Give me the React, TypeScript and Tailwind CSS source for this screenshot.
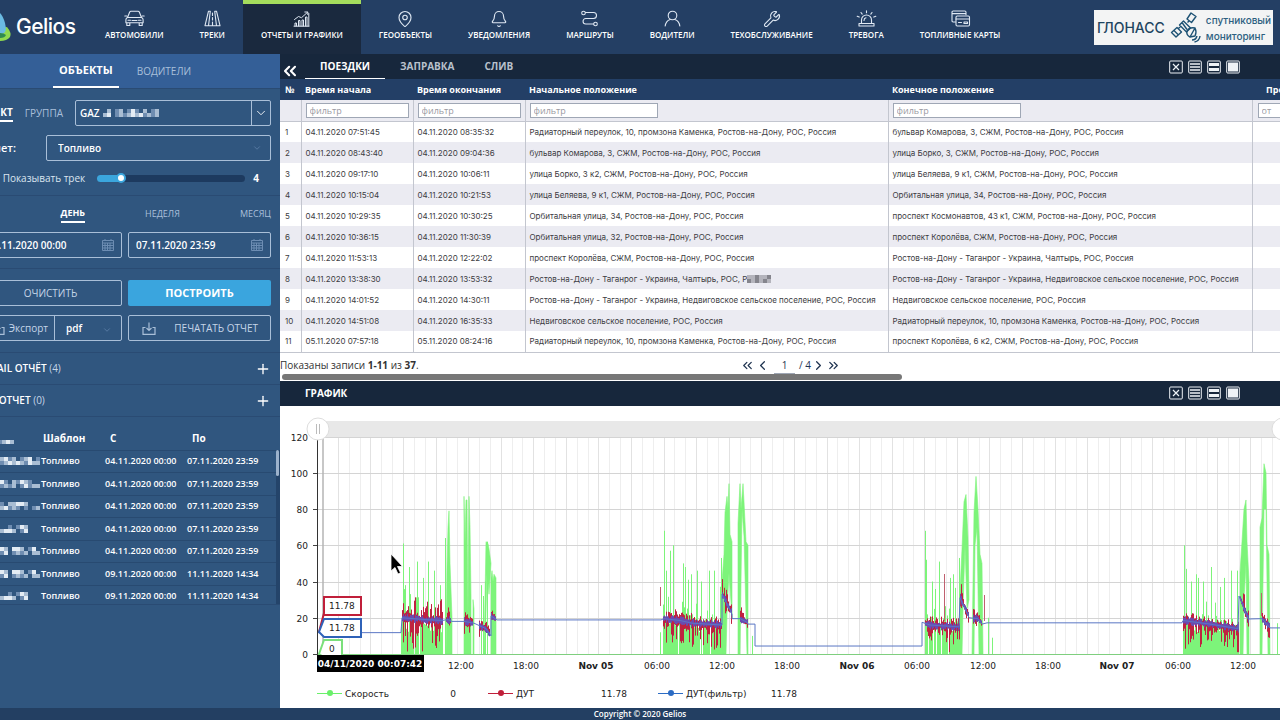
import type { ReactNode } from "react";
import { Bell, ChevronDown, ChevronLeft, ChevronRight, ChevronsLeft, ChevronsRight, MapPin, Plus, Wrench } from "lucide-react";
import clsx from "clsx";

const icon = {
  width: 21,
  height: 17,
  fill: "none",
  stroke: "currentColor",
  strokeWidth: 1.1,
  strokeLinecap: "round" as const,
  strokeLinejoin: "round" as const,
};

const CarIcon = () => (
  <svg {...icon} viewBox="0 0 21 17">
    <path d="M3.5 7.5 5.6 2.2Q6 1.3 7 1.3h7q1 0 1.4.9l2.1 5.3M3.5 7.5h14q1.6.6 1.6 2.2v3.1H1.9V9.7q0-1.6 1.6-2.2ZM2.8 12.8v2.7h3v-2.7M15.2 12.8v2.7h3v-2.7M.8 6h2M18.2 6h2M4 10.2h2.5M14.5 10.2H17M8 10.5h5" />
  </svg>
);

const RoadIcon = () => (
  <svg {...icon} viewBox="0 0 21 17">
    <path d="M6.5 1.2 3 15.7h15L14.5 1.2M6.5 1.2h1.8L6.5 15.7M14.5 1.2h-1.8l1.8 14.5M10.5 3v2.5M10.5 7.5V10M10.5 12v3" />
  </svg>
);

const ChartIcon = () => (
  <svg {...icon} strokeWidth={1} viewBox="0 0 21 17">
    <path d="M4 16v-3h1.5v3M7.5 16v-5.5H9V16M11 16v-6h1.5v6M14.5 16V7H16v9M3 16.2h15M17.8 16V3.5M3.5 9.5l4-3 3 1.2 6-5.4M13.8 2h3v2.6" />
  </svg>
);

const RouteIcon = () => (
  <svg {...icon} viewBox="0 0 21 17">
    <circle cx="4.5" cy="3" r="1.8" />
    <circle cx="16.5" cy="14" r="1.8" />
    <path d="M6.5 2.5h8a3 3 0 0 1 0 6H6.8a2.7 2.7 0 0 0 0 5.500h7.800" />
  </svg>
);

const DriverIcon = () => (
  <svg {...icon} viewBox="0 0 21 17">
    <circle cx="10.5" cy="5.5" r="4.3" />
    <path d="M3.2 16q.6-5.2 5-6.6M17.8 16q-.6-5.2-5-6.6" />
  </svg>
);

const AlarmIcon = () => (
  <svg {...icon} viewBox="0 0 21 17">
    <path d="M5.5 13.5V10a5 5 0 0 1 10 0v3.5M3 13.5h15V16H3ZM8 10.5q0-2.2 2-2.7M10.5.8v2M5 2.5l1.200 1.600M16 2.500l-1.200 1.600M1.200 6.200l2 .9M19.800 6.200l-2 .9" />
  </svg>
);

const CardsIcon = () => (
  <svg {...icon} viewBox="0 0 21 17">
    <path d="M5.5 12H3.2q-1.2 0-1.2-1.2V2.2Q2 1 3.2 1h11.6Q16 1 16 2.2v2.5M2 3.6h14" />
    <rect x="6" y="6" width="13.5" height="10" rx="1.2" />
    <path d="M6 9h13.5M8.5 12.5h3M14 13.5h3.5v-1.500H14Z" />
  </svg>
);

const navItems: { label: string; icon: ReactNode; active?: boolean }[] = [
  { label: "АВТОМОБИЛИ", icon: <CarIcon /> },
  { label: "ТРЕКИ", icon: <RoadIcon /> },
  { label: "ОТЧЕТЫ И ГРАФИКИ", icon: <ChartIcon />, active: true },
  { label: "ГЕООБЪЕКТЫ", icon: <MapPin size={18} strokeWidth={1.5} /> },
  { label: "УВЕДОМЛЕНИЯ", icon: <Bell size={18} strokeWidth={1.5} /> },
  { label: "МАРШРУТЫ", icon: <RouteIcon /> },
  { label: "ВОДИТЕЛИ", icon: <DriverIcon /> },
  { label: "ТЕХОБСЛУЖИВАНИЕ", icon: <Wrench size={18} strokeWidth={1.5} /> },
  { label: "ТРЕВОГА", icon: <AlarmIcon /> },
  { label: "ТОПЛИВНЫЕ КАРТЫ", icon: <CardsIcon /> },
];

function Header() {
  return (
    <header className="flex h-[54px] overflow-hidden bg-[#243f64] text-white">
      <a href="#" className="relative flex w-[87px] shrink-0 items-center pl-4">
        <svg className="absolute left-0 top-2" width="12" height="36" viewBox="0 0 12 36">
          <path d="M0 20 7 19q5 6 3 10-3 4-10 4Z" fill="#8fd94f" />
          <path d="M0 5q3 3 5 10 2 8-1 10L0 27Z" fill="#6bbbe2" />
          <path d="M0 25q4 0 6 2-1 3-6 3Z" fill="#2f8a4f" />
        </svg>
        <span className="font-['Inter'] text-[21px] leading-6 font-medium tracking-tight">Gelios</span>
      </a>
      <nav className="flex flex-1">
        {navItems.map((item) => (
          <a
            key={item.label}
            href="#"
            className={clsx(
              "flex shrink-0 flex-col items-center gap-[2px] border-t-4 px-[18px] pt-[6px] text-[8px] leading-3 font-semibold whitespace-nowrap",
              item.active ? "border-[#a4dc5c] bg-[#1a293e]" : "border-transparent",
            )}
          >
            <span className="flex h-[17px] items-center text-[#dfe8f3]">{item.icon}</span>
            {item.label}
          </a>
        ))}
      </nav>
      <div className="mt-[10px] mr-[7px] flex h-[35px] w-[179px] shrink-0 items-center justify-between bg-[#f3f4f4] pr-[2px] pl-[3px] font-['Inter'] text-[#1d4560]">
        <span className="text-[14px] font-medium">ГЛОНАСС</span>
        <svg width="31" height="31" viewBox="0 0 31 31" fill="none" stroke="#1d5274" strokeWidth="1.4" strokeLinejoin="round">
          <path d="m17 7 4-6 5 3.5-4.5 6ZM1.5 20.5l5.5-5 4.5 4.5-5.5 5ZM3.5 18l5 5M9.5 13l4-4 7 7-4 4ZM12 10.5l5 7M17.5 10.5l2-2M8.5 16.5l2-2" />
          <path d="M17 19q2-4 8-3l-5 9q-4-2-3-6ZM25 16q2 4 0 8l-5 1M22 28q4 0 5-4M24.5 30q5-1 5.5-6" />
        </svg>
        <span className="text-[10px] leading-4 font-medium text-[#2c6080]">
          спутниковый
          <br />
          мониторинг
        </span>
      </div>
    </header>
  );
}

// censored plate numbers, one character of the mask per square
function Mosaic({ mask, className }: { mask: string[]; className?: string }) {
  const fills: Record<string, string> = { a: "#e4ecf4", b: "#a9bdd3", c: "#6f8db1", d: "#85858d", e: "#b4b4bc" };
  return (
    <svg className={clsx("shrink-0", className)} width={mask[0].length * 4} height={mask.length * 4} shapeRendering="crispEdges">
      {mask.flatMap((row, y) =>
        row.split("").map((c, x) => (fills[c] ? <rect key={`${x}-${y}`} x={x * 4} y={y * 4} width="4" height="4" fill={fills[c]} /> : null)),
      )}
    </svg>
  );
}

const CalendarIcon = () => (
  <svg width="12" height="12" viewBox="0 0 12 12" fill="none" stroke="#6d8db3">
    <path d="M.5 1.5h11v10H.5ZM.5 4h11M3 4v7.5M5.5 4v7.5M8 4v7.5M.5 6.5h11M.5 9h11M3 0v2M9 0v2" />
  </svg>
);

function DateField({ label, value }: { label: string; value: string }) {
  return (
    <label className="flex h-[26px] w-[143px] shrink-0 items-center rounded-[2px] border border-[#a9bfd8] px-[7px]">
      <span className="sr-only">{label}</span>
      <input className="min-w-0 flex-1 text-[10px] font-semibold outline-none" defaultValue={value} />
      <CalendarIcon />
    </label>
  );
}

const savedReports = [
  { mask: ["bacb.cba.c", "cbababcabb"], from: "04.11.2020 00:00", to: "07.11.2020 23:59" },
  { mask: ["ac.bcabc..", "cbcb.cacbb"], from: "04.11.2020 00:00", to: "07.11.2020 23:59" },
  { mask: ["c.bbaab...", "bacbc.c.cb"], from: "04.11.2020 00:00", to: "07.11.2020 23:59" },
  { mask: ["..c.cab...", "baab.ca..."], from: "04.11.2020 00:00", to: "07.11.2020 23:59" },
  { mask: ["ab.aab.ca.", "ca.cbcb.bb"], from: "04.11.2020 00:00", to: "07.11.2020 23:59" },
  { mask: ["ab.aab.ca.", "ca.cbcb.bb"], from: "09.11.2020 00:00", to: "11.11.2020 14:34" },
  { mask: ["..c.cab...", "baab.ca..."], from: "09.11.2020 00:00", to: "11.11.2020 14:34" },
];

function Sidebar() {
  return (
    <aside className="flex w-[280px] shrink-0 justify-end overflow-hidden bg-[#30567f] text-white">
      <div className="w-[310px] shrink-0">
        <div className="flex h-[35px] border-b border-[#2a4b73] bg-[#345f97] pl-[83px]">
          <button className="border-b-2 border-white px-[6px] text-[11px] font-bold">ОБЪЕКТЫ</button>
          <button className="ml-3 px-[6px] text-[10px] text-[#a9bfda]">ВОДИТЕЛИ</button>
        </div>

        <div className="flex flex-col gap-[9px] border-b border-[#2a4b73] px-[9px] pt-[11px] pb-[9px]">
          <div className="flex items-center justify-end gap-3 text-[10px]">
            <button className="border-b-2 border-white leading-4 font-bold">ОБЪЕКТ</button>
            <button className="text-[#a9bfda]">ГРУППА</button>
            <div className="flex h-[26px] w-[196px] shrink-0 items-center rounded-[2px] border border-[#a9bfd8]">
              <input aria-label="Объект" className="w-[27px] pl-1 text-[10px] font-semibold outline-none" defaultValue="GAZ" />
              <Mosaic mask={[".b.cb.cac.b.cb", "ba.cbcbabacbcb"]} />
              <button aria-label="Выбрать объект" className="ml-auto flex h-full w-[19px] items-center justify-center border-l border-[#a9bfd8]">
                <ChevronDown size={14} strokeWidth={1.5} />
              </button>
            </div>
          </div>
          <div className="flex items-center justify-end gap-[30px]">
            <label htmlFor="template" className="text-[11px] font-semibold">Отчет:</label>
            <div className="relative w-[225px] shrink-0">
              <select id="template" className="block h-[26px] w-full appearance-none rounded-[2px] border border-[#a9bfd8] pl-[11px] text-[10px] font-semibold">
                <option>Топливо</option>
              </select>
              <ChevronDown className="absolute top-2 right-[9px] text-[#5d7fa8]" size={10} />
            </div>
          </div>
          <div className="flex h-4 items-center justify-end gap-3 pr-3">
            <label htmlFor="track" className="text-[10px] font-medium text-[#dbe5f0]">Показывать трек</label>
            <input
              id="track"
              type="range"
              min="0"
              max="30"
              defaultValue="4"
              className="h-[7px] w-[148px] appearance-none rounded-full bg-[linear-gradient(to_right,#3ba6dd_16%,#1d3a5f_16%)] [&::-webkit-slider-thumb]:size-[10px] [&::-webkit-slider-thumb]:appearance-none [&::-webkit-slider-thumb]:rounded-full [&::-webkit-slider-thumb]:border-2 [&::-webkit-slider-thumb]:border-[#3ba6dd] [&::-webkit-slider-thumb]:bg-white"
            />
            <span className="-ml-1 text-[10px] font-bold">4</span>
          </div>
        </div>

        <div className="border-b border-[#2a4b73] px-[9px] pt-[9px] pb-[10px]">
          <div className="mb-[9px] flex justify-end gap-[60px] text-[9px] leading-4">
            <button className="border-b-2 border-white font-bold">ДЕНЬ</button>
            <button className="text-[#a9bfda]">НЕДЕЛЯ</button>
            <button className="text-[#a9bfda]">МЕСЯЦ</button>
          </div>
          <div className="flex justify-between">
            <DateField label="Начало" value="04.11.2020 00:00" />
            <DateField label="Конец" value="07.11.2020 23:59" />
          </div>
        </div>

        <div className="grid grid-cols-2 gap-x-[6px] gap-y-[9px] border-b border-[#2a4b73] px-[9px] pt-[11px] pb-[11px] text-[10px] text-[#c5d5e8]">
          <button className="h-[26px] rounded-[2px] border border-[#a9bfd8]">ОЧИСТИТЬ</button>
          <button className="h-[26px] rounded-[2px] bg-[#3aa5de] text-[11px] font-bold text-white">ПОСТРОИТЬ</button>
          <div className="flex h-[26px] items-center rounded-[2px] border border-[#a9bfd8]">
            <button className="flex h-full w-[75px] items-center justify-end gap-1 border-r border-[#a9bfd8] pr-[6px]">
              <DownloadIcon />
              Экспорт
            </button>
            <div className="relative flex-1">
              <select aria-label="Формат" className="block w-full appearance-none pl-[11px] text-[10px] font-semibold text-white">
                <option>pdf</option>
              </select>
              <ChevronDown className="absolute top-1 right-[9px] text-[#5d7fa8]" size={10} />
            </div>
          </div>
          <button className="flex h-[26px] items-center justify-between rounded-[2px] border border-[#a9bfd8] pr-3 pl-[13px]">
            <DownloadIcon />
            ПЕЧАТАТЬ ОТЧЕТ
          </button>
        </div>

        {[
          ["E-MAIL ОТЧЁТ", "(4)"],
          ["FTP ОТЧЕТ", "(0)"],
        ].map(([title, count]) => (
          <button key={title} className="flex h-8 w-full items-center justify-between border-b border-[#2a4b73] px-[9px] text-[10px] font-semibold">
            <span>
              {title} <span className="font-normal text-[#c5d5e8]">{count}</span>
            </span>
            <Plus size={16} strokeWidth={2} />
          </button>
        ))}

        <div className="relative h-[188px] overflow-hidden border-b border-[#2a4b73]">
          <table className="w-full table-fixed text-left text-[9px] leading-3 font-semibold whitespace-nowrap">
            <colgroup>
              <col className="w-[71px]" />
              <col className="w-[64px]" />
              <col className="w-[82px]" />
              <col />
            </colgroup>
            <thead>
              <tr className="h-[33px] align-bottom text-[10px] font-bold">
                <th className="pb-[6px]">
                  <Mosaic className="ml-5" mask={["..cbab"]} />
                </th>
                <th className="pb-[6px] pl-[2px]">Шаблон</th>
                <th className="pb-[6px] pl-[5px]">С</th>
                <th className="pb-[6px] pl-[5px]">По</th>
              </tr>
            </thead>
            <tbody>
              {savedReports.map((r, i) => (
                <tr key={i} className="h-[22px] border-t border-[#284a71] even:h-[23px]">
                  <td>
                    <Mosaic className="ml-[30px]" mask={r.mask} />
                  </td>
                  <td>Топливо</td>
                  <td>{r.from}</td>
                  <td>{r.to}</td>
                </tr>
              ))}
            </tbody>
          </table>
          <div className="absolute top-[33px] right-0 bottom-0 w-1 bg-[#24446a]">
            <div className="h-[26px] w-[3px] rounded-full bg-[#9cb2cc]" />
          </div>
        </div>
      </div>
    </aside>
  );
}

function DownloadIcon() {
  return (
    <svg width="14" height="13" viewBox="0 0 14 13" fill="none" stroke="#a9bfd8" strokeWidth="1.2">
      <path d="M3.5 5.5H1v6.8h12V5.5h-2.5M7 .5v8M4.5 6 7 8.5 9.5 6" />
    </svg>
  );
}

function WindowButtons() {
  const glyphs = ["m4 4 6 6M10 4l-6 6", "M2 4h10M2 7h10M2 10h10", "M2 4.5h10M2 9.5h10", "M2 7h10"];
  const widths = [1.2, 1.6, 3, 9];
  return (
    <div className="mr-10 ml-auto flex items-center gap-[5px]">
      {["Закрыть", "Список", "Разделить", "Развернуть"].map((label, i) => (
        <button key={label} aria-label={label}>
          <svg width="14" height="14" viewBox="0 0 14 14" fill="none" stroke="#eef2f6">
            <rect x=".7" y="1" width="12.6" height="12" rx="1" />
            <path d={glyphs[i]} strokeWidth={widths[i]} />
          </svg>
        </button>
      ))}
    </div>
  );
}

const trips = [
  ["04.11.2020 07:51:45", "04.11.2020 08:35:32", "Радиаторный переулок, 10, промзона Каменка, Ростов-на-Дону, РОС, Россия", "бульвар Комарова, 3, СЖМ, Ростов-на-Дону, РОС, Россия"],
  ["04.11.2020 08:43:40", "04.11.2020 09:04:36", "бульвар Комарова, 3, СЖМ, Ростов-на-Дону, РОС, Россия", "улица Борко, 3, СЖМ, Ростов-на-Дону, РОС, Россия"],
  ["04.11.2020 09:17:10", "04.11.2020 10:06:11", "улица Борко, 3 к2, СЖМ, Ростов-на-Дону, РОС, Россия", "улица Беляева, 9 к1, СЖМ, Ростов-на-Дону, РОС, Россия"],
  ["04.11.2020 10:15:04", "04.11.2020 10:21:53", "улица Беляева, 9 к1, СЖМ, Ростов-на-Дону, РОС, Россия", "Орбитальная улица, 34, Ростов-на-Дону, РОС, Россия"],
  ["04.11.2020 10:29:35", "04.11.2020 10:30:25", "Орбитальная улица, 34, Ростов-на-Дону, РОС, Россия", "проспект Космонавтов, 43 к1, СЖМ, Ростов-на-Дону, РОС, Россия"],
  ["04.11.2020 10:36:15", "04.11.2020 11:30:39", "Орбитальная улица, 32, Ростов-на-Дону, РОС, Россия", "проспект Королёва, СЖМ, Ростов-на-Дону, РОС, Россия"],
  ["04.11.2020 11:53:13", "04.11.2020 12:22:02", "проспект Королёва, СЖМ, Ростов-на-Дону, РОС, Россия", "Ростов-на-Дону - Таганрог - Украина, Чалтырь, РОС, Россия"],
  ["04.11.2020 13:38:30", "04.11.2020 13:53:32", "Ростов-на-Дону - Таганрог - Украина, Чалтырь, РОС, Р", "Ростов-на-Дону - Таганрог - Украина, Недвиговское сельское поселение, РОС, Россия"],
  ["04.11.2020 14:01:52", "04.11.2020 14:30:11", "Ростов-на-Дону - Таганрог - Украина, Недвиговское сельское поселение, РОС, Россия", "Недвиговское сельское поселение, РОС, Россия"],
  ["04.11.2020 14:51:08", "04.11.2020 16:35:33", "Недвиговское сельское поселение, РОС, Россия", "Радиаторный переулок, 10, промзона Каменка, Ростов-на-Дону, РОС, Россия"],
  ["05.11.2020 07:57:18", "05.11.2020 08:24:16", "Радиаторный переулок, 10, промзона Каменка, Ростов-на-Дону, РОС, Россия", "проспект Королёва, 6 к2, СЖМ, Ростов-на-Дону, РОС, Россия"],
];

const columns = ["Время начала", "Время окончания", "Начальное положение", "Конечное положение"];

function Trips() {
  return (
    <section className="overflow-hidden">
      <div className="flex h-[25px] bg-[#17273c] text-[10px] font-bold text-[#b9c1cc]">
        <button aria-label="Свернуть панель" className="mt-2 flex w-[25px] items-center text-white">
          <ChevronsLeft size={20} strokeWidth={2.5} />
        </button>
        <button className="border-b border-white px-[15px] text-white">ПОЕЗДКИ</button>
        <button className="px-[15px]">ЗАПРАВКА</button>
        <button className="px-[15px]">СЛИВ</button>
        <WindowButtons />
      </div>
      <table className="w-[1072px] table-fixed border-b border-[#c3c6cf] text-left font-['Inter'] text-[8px] whitespace-nowrap text-[#3c3c42]">
        <colgroup>
          <col className="w-[21px]" />
          <col className="w-[112px]" />
          <col className="w-[112px]" />
          <col className="w-[363px]" />
          <col className="w-[364px]" />
          <col />
        </colgroup>
        <thead className="font-['Open_Sans']">
          <tr className="h-[21px] bg-[#233f66] text-[9px] text-white">
            <th className="pl-[5px]">№</th>
            {columns.map((c) => (
              <th key={c} className="pl-1">{c}</th>
            ))}
            <th className="pl-[14px]">Пробег, км</th>
          </tr>
          <tr className="h-[21px] border-b border-[#c3c6cf] bg-[#ebebf2]">
            <td className="border-r border-[#c3c6cf]" />
            {columns.map((c, i) => (
              <td key={c} className="border-r border-[#c3c6cf] pl-1">
                <input
                  aria-label={c}
                  placeholder="фильтр"
                  className={clsx("block h-[15px] border border-[#9fa7b5] bg-white px-[3px] text-[9px] font-normal placeholder:text-[#9a9aa2]", i < 2 ? "w-[103px]" : "w-[128px]")}
                />
              </td>
            ))}
            <td className="pl-[5px]">
              <input aria-label="Пробег от" placeholder="от" className="block h-[15px] w-12 border border-[#9fa7b5] bg-white px-[3px] text-[9px] placeholder:text-[#9a9aa2]" />
            </td>
          </tr>
        </thead>
        <tbody>
          {trips.map((row, i) => (
            <tr key={i} className="h-[21px] even:bg-[#ebebf2]">
              <td className="border-r border-[#c3c6cf] pl-[5px]">{i + 1}</td>
              {row.map((cell, j) => (
                <td key={j} className="border-r border-[#c3c6cf] pl-1">
                  <span className="flex items-center">
                    {cell}
                    {i === 7 && j === 2 && <Mosaic mask={["eedeed", "dedede"]} />}
                  </span>
                </td>
              ))}
              <td />
            </tr>
          ))}
        </tbody>
      </table>
      <div className="relative flex h-[21px] items-center pt-[5px] text-[10px] text-[#333]">
        <p>
          Показаны записи <b>1-11</b> из <b>37</b>.
        </p>
        <div className="absolute left-[460px] flex items-center text-[#1f3350]">
          <button aria-label="Первая страница"><ChevronsLeft size={15} /></button>
          <button aria-label="Назад"><ChevronLeft size={15} /></button>
          <input aria-label="Страница" defaultValue="1" className="mx-1 h-4 w-[21px] border-b border-[#9fa7b5] text-center" />
          <span>/ 4</span>
          <button aria-label="Вперёд"><ChevronRight size={15} /></button>
          <button aria-label="Последняя страница"><ChevronsRight size={15} /></button>
        </div>
      </div>
      <div className="mb-px ml-[2px] h-[6px] w-[62%] rounded-full bg-[#777]" />
    </section>
  );
}

// plot area: x in pixels, speed/fuel 0..120 on the y axis
const Y0 = 248;
const yOf = (v: number) => Y0 - v * 1.812;

function rng(seed: number) {
  let s = seed;
  return () => {
    s = (s * 1103515245 + 12345) % 2147483648;
    return s / 2147483648;
  };
}

// [x, speed] peaks that rise above the stop-and-go noise
const peaks: [number, number][] = [
  [123, 61], [125, 38], [129, 48], [137, 51], [143, 42], [148, 51], [154, 46], [160, 38], [165, 64],
  [201, 38], [203, 32], [205, 40], [207, 62],
  [380, 12], [384, 68], [386, 46], [390, 57], [393, 60], [403, 50], [405, 48], [408, 41], [411, 44], [417, 46], [421, 40], [429, 46], [434, 46], [441, 53],
  [472, 10], [645, 68], [646, 52], [652, 40], [659, 51], [670, 42], [673, 44], [679, 53], [712, 9], [708, 20],
  [904, 60], [906, 47], [911, 40], [916, 44], [918, 42], [923, 40], [931, 48], [940, 37], [944, 42], [951, 46], [957, 46], [997, 17],
];

// driving stretches, as outlines; most are closed on the zero line
const bursts: [number, number][][] = [
  [[166, 0], [167, 48], [168, 70], [169, 79], [170, 50], [172, 20], [172, 0]],
  [[184, 0], [184, 87], [185, 60], [186, 85], [187, 85], [188, 20], [189, 87], [190, 70], [191, 32], [191, 0]],
  [[193, 0], [193, 30], [194, 25], [194, 0]],
  [[204, 0], [206, 62], [208, 61], [209, 58], [211, 50], [209, 33], [207, 45], [205, 0]],
  [[211, 0], [211, 42], [212, 46], [213, 40], [214, 44], [216, 42], [216, 0]],
  [[442, 0], [442, 40], [444, 55], [445, 78], [447, 87], [448, 80], [449, 94], [450, 66], [452, 62], [452, 20], [449, 45], [447, 22], [446, 0]],
  [[458, 0], [458, 72], [460, 94], [461, 80], [463, 94], [464, 84], [466, 62], [468, 60], [468, 0], [467, 0], [464, 65], [462, 80], [461, 40], [460, 0]],
  [[680, 0], [680, 35], [682, 58], [684, 84], [686, 88], [688, 64], [689, 30], [687, 25], [685, 60], [683, 25], [682, 0]],
  [[692, 0], [694, 78], [696, 98], [698, 80], [700, 55], [702, 50], [703, 0], [699, 0], [697, 70], [695, 60], [694, 0]],
  [[960, 0], [960, 45], [962, 62], [964, 80], [966, 85], [967, 62], [969, 40], [969, 0], [967, 0], [966, 50], [964, 30], [963, 0]],
  [[980, 0], [980, 70], [982, 75], [984, 105], [986, 100], [987, 60], [989, 55], [990, 0], [988, 0], [986, 80], [984, 80], [982, 0]],
];

const sessions = [
  { from: 121, to: 163, seed: 7 },
  { from: 383, to: 442, seed: 21 },
  { from: 644, to: 680, seed: 4 },
  { from: 903, to: 959, seed: 13 },
];

// filtered fuel level
const fuel: [number, number][] = [
  [38, 11.78], [121, 11.78], [122, 20], [145, 19], [162, 18.5], [168, 19], [172, 18], [184, 18], [194, 17], [202, 15],
  [206, 14], [211, 10], [211, 21], [217, 18.8], [381, 18.8], [384, 19.5], [400, 18.5], [412, 17], [442, 16], [442, 33], [452, 22],
  [452, 19.5], [460, 19.5], [467, 17.5], [468, 16.5], [475, 16.5], [475, 4.4], [642, 4.4], [642, 17.5], [650, 16],
  [679, 15], [680, 31], [689, 20], [698, 19.5], [702, 16.5], [707, 17.2], [902, 17.2], [903, 18.5], [930, 16.5],
  [958, 14], [959, 32], [968, 19.3], [982, 19.5], [990, 14.4], [1000, 14.4],
];

const fuelAt = (x: number) => {
  const i = fuel.findIndex((p) => p[0] > x);
  if (i < 1) return fuel[0][1];
  const [x1, v1] = fuel[i - 1];
  const [x2, v2] = fuel[i];
  return v1 + ((v2 - v1) * (x - x1)) / (x2 - x1);
};

// [from, to, reach above, reach below] of the raw sensor
const noisy = [
  [122, 163, 11, 19], [166, 171, 6, 3], [184, 193, 5, 7], [199, 210, 3, 9], [211, 216, 5, 3],
  [383, 442, 5, 14], [442, 452, 8, 7], [460, 468, 7, 4], [645, 680, 4, 15], [680, 689, 8, 5], [693, 702, 5, 4],
  [903, 930, 4, 15], [930, 959, 4, 15], [960, 969, 7, 4], [982, 990, 3, 8],
];

function buildPaths() {
  let speed = "";
  let raw = "";
  let filtered = "";
  for (const s of sessions) {
    const r = rng(s.seed);
    for (let x = s.from; x < s.to; x++) {
      const a = r();
      const b = r();
      if (a > 0.1) speed += `M${x}.5 ${Y0}V${yOf(12 + b * 10 + (a > 0.7 ? 16 * b : 0))}`;
    }
  }
  for (const [x, v] of peaks) speed += `M${x}.5 ${Y0}V${yOf(v)}`;
  noisy.forEach(([from, to, up, down], n) => {
    const r = rng(n * 17 + 3);
    for (let x = from; x < to; x++) {
      const v = fuelAt(x);
      const a = r();
      const b = r();
      raw += `M${x}.5 ${yOf(v + 1 + a * a * up)}V${yOf(Math.max(1, v - 1 - b * b * down))}`;
      filtered += `M${x}.5 ${yOf(v + 0.5 + b * 2)}V${yOf(v - 0.5 - a * 2)}`;
    }
  });
  return { speed, raw, filtered };
}

const paths = buildPaths();
const burstPath = bursts.map((b) => "M" + b.map(([x, v]) => `${x} ${yOf(v)}`).join("L") + "Z").join("");
const fuelPath = "M" + fuel.map(([x, v]) => `${x} ${yOf(v)}`).join("L");

const ticks: [number, string][] = [
  [181, "12:00"], [246, "18:00"], [316, "Nov 05"], [377, "06:00"], [442, "12:00"], [507, "18:00"],
  [577, "Nov 06"], [637, "06:00"], [703, "12:00"], [768, "18:00"], [837, "Nov 07"], [898, "06:00"], [963, "12:00"],
];

const legend = [
  { x: 37, color: "#6af06a", name: "Скорость", value: "0", vx: 173 },
  { x: 208, color: "#c01f3a", name: "ДУТ", value: "11.78", vx: 334 },
  { x: 378, color: "#2c6cc4", name: "ДУТ(фильтр)", value: "11.78", vx: 504 },
];

function Graph() {
  return (
    <section className="overflow-hidden">
      <div className="flex h-[25px] items-center bg-[#17273c] pl-[25px] text-[10px] font-bold text-white">
        <h2>ГРАФИК</h2>
        <WindowButtons />
      </div>
      <svg width="1000" height="302" className="block font-['DejaVu_Sans'] text-[9px]" fill="#222">
        <rect x="40" y="15" width="960" height="16" fill="#e8e8e8" />
        {Array.from({ length: 88 }, (_, i) => (
          <path key={i} d={`M${Math.round(57.8 + i * 10.86)}.5 31V${Y0}`} stroke={i % 3 === 0 ? "#e2e2e2" : "#eeeeee"} />
        ))}
        {[0, 20, 40, 60, 80, 100, 120].map((v) => (
          <g key={v}>
            <path d={`M33 ${Math.round(yOf(v))}.5H1000`} stroke="#d4d4d4" />
            <path d={`M33 ${Math.round(yOf(v))}.5H38`} stroke="#444" />
            <text x="28" y={Math.round(yOf(v)) + 4} textAnchor="end">{v}</text>
          </g>
        ))}
        <path d={`M37.5 31V${Y0}`} stroke="#333" />
        <path d={`M43 31V${Y0}`} stroke="#b5b5b5" strokeWidth="1.5" />

        <path d={burstPath} fill="#7df47a" stroke="#7df47a" strokeWidth=".6" />
        <path d={paths.speed} stroke="#7df47a" />
        <path d={`M38 ${Y0}.5H1000`} stroke="#7fcf7f" />
        <path d={paths.raw} stroke="#bf2340" />
        <path d="M664.5 168V215M380.5 181V200M981.5 187V210M704.5 189V215" stroke="#c0606f" />
        <path d={paths.filtered} stroke="#6a4bb0" />
        <path d={fuelPath} fill="none" stroke="#5a76c4" />

        <g fill="#fff" strokeWidth="2">
          <path d="M39 226 44 207V191H81V209H44" stroke="#c01f3a" />
          <path d="M39 226 44 213H81V231H44Z" stroke="#2f62b8" />
          <path d="M39 248 44 234H62V250H42Z" stroke="#7be07b" />
        </g>
        <text x="49" y="203">11.78</text>
        <text x="49" y="225">11.78</text>
        <text x="49" y="246">0</text>
        <rect x="37" y="249" width="107" height="17" fill="#000" />
        <text x="90" y="261" textAnchor="middle" fill="#fff" fontWeight="bold">04/11/2020 00:07:42</text>

        {ticks.map(([x, label]) => (
          <text key={x} x={x} y="263" textAnchor="middle" fontWeight={label.startsWith("Nov") ? "bold" : "normal"}>{label}</text>
        ))}
        {legend.map((l) => (
          <g key={l.name}>
            <path d={`M${l.x} 287.5h25`} stroke={l.color} />
            <circle cx={l.x + 13} cy="287" r="3" fill={l.color} />
            <text x={l.x + 28} y="291">{l.name}</text>
            <text x={l.vx} y="291" textAnchor="middle">{l.value}</text>
          </g>
        ))}

        <g fill="#fff" stroke="#ddd">
          <circle cx="38" cy="23" r="11" />
          <circle cx="1003" cy="23" r="11" />
          <path d="M36.5 18v10M39.5 18v10" stroke="#bbb" />
        </g>
        <path d="m111 148 0 17 4-3.5 3 6.5 2.5-1.2-3-6.3h5Z" fill="#000" stroke="#fff" strokeWidth=".8" />
      </svg>
    </section>
  );
}

export default function App() {
  return (
    <div className="flex min-h-screen flex-col bg-white font-['Open_Sans','Noto_Sans',sans-serif]">
      <Header />
      <div className="flex flex-1">
        <Sidebar />
        <main className="min-w-0 flex-1">
          <Trips />
          <Graph />
        </main>
      </div>
      <footer className="h-3 bg-[#233f62] text-center text-[8px] leading-3 font-semibold text-white">Copyright © 2020 Gelios</footer>
    </div>
  );
}
